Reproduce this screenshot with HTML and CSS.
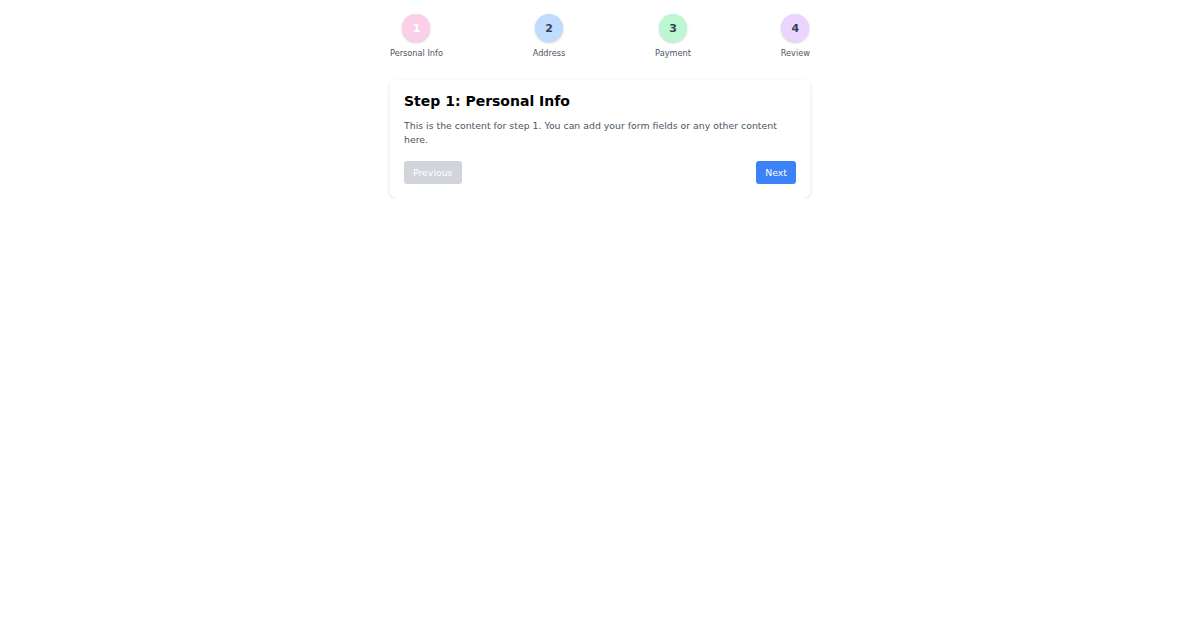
FILE: index.html
```html
<!DOCTYPE html>
<html lang="en">
<head>
<meta charset="utf-8">
<title>Stepper</title>
<link rel="stylesheet" href="styles.css">
</head>
<body>
<div class="wrap">
  <div class="steps">
    <div class="step">
      <div class="circle c1">1</div>
      <div class="label">Personal Info</div>
    </div>
    <div class="step">
      <div class="circle c2">2</div>
      <div class="label">Address</div>
    </div>
    <div class="step">
      <div class="circle c3">3</div>
      <div class="label">Payment</div>
    </div>
    <div class="step">
      <div class="circle c4">4</div>
      <div class="label">Review</div>
    </div>
  </div>
  <div class="card">
    <h2 class="title">Step 1: Personal Info</h2>
    <p class="text">This is the content for step 1. You can add your form fields or any other content here.</p>
    <div class="actions">
      <button class="btn btn-prev" disabled>Previous</button>
      <button class="btn btn-next">Next</button>
    </div>
  </div>
</div>
</body>
</html>
```
FILE: styles.css
```css
* { box-sizing: border-box; }
html, body { margin: 0; padding: 0; background: #ffffff; }
body { font-family: "DejaVu Sans", sans-serif; color: #111827; }
.wrap { width: 420px; margin: 0 auto; padding-top: 14px; }
.steps { display: flex; justify-content: space-between; }
.step { display: flex; flex-direction: column; align-items: center; }
.circle {
  width: 28px; height: 28px; border-radius: 50%;
  display: flex; align-items: center; justify-content: center;
  font-size: 11px; font-weight: bold; color: #374151;
  box-shadow: 0 1px 3px rgba(0,0,0,0.12), 0 1px 2px rgba(0,0,0,0.08);
}
.c1 { background: #fbcfe8; color: #ffffff; }
.c2 { background: #bfdbfe; }
.c3 { background: #bbf7d0; }
.c4 { background: #e9d5ff; }
.label { margin-top: 5px; font-size: 8.2px; color: #4b5563; line-height: 12px; }
.card {
  margin-top: 21px; background: #fff; border-radius: 6px; padding: 12px 14px 14px;
  box-shadow: 0 2px 5px rgba(0,0,0,0.10), 0 1px 2px rgba(0,0,0,0.06);
}
.title { margin: 0; font-size: 14px; font-weight: bold; line-height: 18px; color: #000; }
.text { margin: 9px 0 0; font-size: 9.35px; line-height: 14px; color: #4b5563; }
.actions { display: flex; justify-content: space-between; margin-top: 14px; }
.btn {
  border: none; border-radius: 3px; height: 23px; padding: 0 9px;
  font-family: "DejaVu Sans", sans-serif; font-size: 9.35px; font-weight: normal; color: #fff;
}
.btn-prev { background: #d1d5db; }
.btn-next { background: #3b82f6; }
```
